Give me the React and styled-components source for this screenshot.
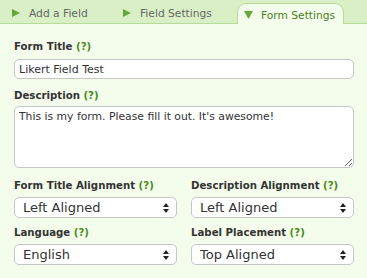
import React from 'react';
import styled, { createGlobalStyle } from 'styled-components';

const Global = createGlobalStyle`
  html, body { margin: 0; padding: 0; background: #f4fdec; }
  body { font-family: "DejaVu Sans", Verdana, sans-serif; }
`;

const Panel = styled.div`
  width: 367px;
  height: 278px;
  background: #f4fdec;
  overflow: hidden;
`;

const TabBar = styled.div`
  display: flex;
  align-items: flex-end;
  height: 23px;
  padding-left: 5px;
  background: #d9f0c6;
  border-bottom: 1px solid #b6db9a;
`;

const Tab = styled.div`
  display: flex;
  align-items: center;
  flex-shrink: 0;
  gap: 8px;
  white-space: nowrap;
  width: ${p => p.$w}px;
  height: ${p => (p.$active ? '21px' : '23px')};
  margin-bottom: ${p => (p.$active ? '-1px' : '0')};
  padding: ${p => (p.$active ? '2px 0 0 6px' : '3px 0 0 7px')};
  font-size: 10.7px;
  color: ${p => (p.$active ? '#4b7e25' : '#666')};
  background: ${p => (p.$active ? '#f4fdec' : 'transparent')};
  border: ${p => (p.$active ? '1px solid #b6db9a' : 'none')};
  border-bottom: none;
  border-radius: 9px 9px 0 0;
  box-sizing: border-box;
`;

const Arrow = styled.svg`
  width: 9px;
  height: 10px;
  fill: #67a63a;
  flex-shrink: 0;
`;

const Body = styled.div`
  padding: 16px 13px 0 14px;
  display: flex;
  flex-direction: column;
`;

const Label = styled.div`
  font-size: 10.2px;
  line-height: 13px;
  font-weight: bold;
  color: #333;
  margin-bottom: ${p => p.$mb}px;
  white-space: nowrap;
  span { color: #4c8a1c; }
`;

const Field = styled.div`
  margin-bottom: ${p => p.$mb}px;
`;

const TextInput = styled.input`
  display: block;
  box-sizing: border-box;
  width: 340px;
  height: 20px;
  padding: 0 4px;
  border: 1px solid #c6c6c6;
  border-radius: 5px;
  background: #fff;
  font-family: "DejaVu Sans", Verdana, sans-serif;
  font-size: 11px;
  color: #333;
  outline: none;
`;

const TextArea = styled.textarea`
  display: block;
  box-sizing: border-box;
  width: 340px;
  height: 62px;
  padding: 3px 4px;
  border: 1px solid #c6c6c6;
  border-radius: 5px;
  background: #fff;
  font-family: "DejaVu Sans", Verdana, sans-serif;
  font-size: 10.8px;
  color: #333;
  resize: vertical;
  outline: none;
`;

const Grid = styled.div`
  display: grid;
  grid-template-columns: 177px 163px;
  row-gap: 8px;
`;

const SelectBox = styled.div`
  position: relative;
  box-sizing: border-box;
  width: 163px;
  height: 21px;
  border: 1px solid #c6c6c6;
  border-radius: 5px;
  background: #fff;
  display: flex;
  align-items: center;
  padding-left: 8px;
  font-size: 13px;
  color: #333;
`;

const Updown = styled.svg`
  position: absolute;
  right: 7px;
  top: 5px;
  width: 6px;
  height: 10px;
  fill: #222;
`;

const Help = () => <span>(?)</span>;

const Select = ({ value }) => (
  <SelectBox>
    {value}
    <Updown viewBox="0 0 6 10">
      <path d="M3 0 L6 4 L0 4 Z M0 6 L6 6 L3 10 Z" />
    </Updown>
  </SelectBox>
);

const TabItem = ({ active, w, children }) => (
  <Tab $active={active} $w={w}>
    <Arrow viewBox="0 0 9 10">
      {active ? <path d="M0 1 L9 1 L4.5 9 Z" /> : <path d="M0 1 L8 5 L0 9 Z" />}
    </Arrow>
    {children}
  </Tab>
);

export default function App() {
  return (
    <Panel>
      <Global />
      <TabBar>
        <TabItem w={111}>Add a Field</TabItem>
        <TabItem w={121}>Field Settings</TabItem>
        <TabItem w={107} active>Form Settings</TabItem>
      </TabBar>
      <Body>
        <Field $mb={10}>
          <Label $mb={6}>Form Title <Help /></Label>
          <TextInput defaultValue="Likert Field Test" />
        </Field>
        <Field $mb={11}>
          <Label $mb={4}>Description <Help /></Label>
          <TextArea defaultValue="This is my form. Please fill it out. It's awesome!" />
        </Field>
        <Grid>
          <div>
            <Label $mb={5}>Form Title Alignment <Help /></Label>
            <Select value="Left Aligned" />
          </div>
          <div>
            <Label $mb={5}>Description Alignment <Help /></Label>
            <Select value="Left Aligned" />
          </div>
          <div>
            <Label $mb={5}>Language <Help /></Label>
            <Select value="English" />
          </div>
          <div>
            <Label $mb={5}>Label Placement <Help /></Label>
            <Select value="Top Aligned" />
          </div>
        </Grid>
      </Body>
    </Panel>
  );
}
